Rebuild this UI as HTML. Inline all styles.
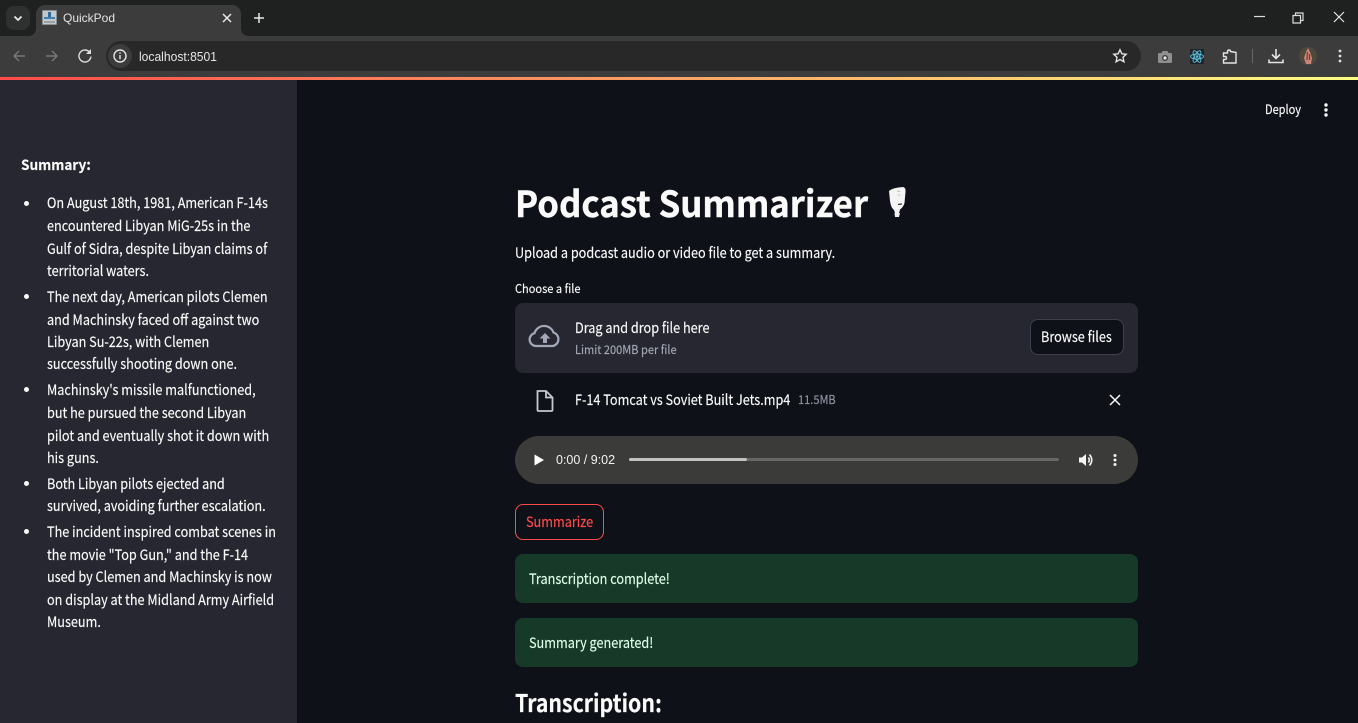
<!DOCTYPE html>
<html lang="en"><head><meta charset="utf-8"><title>QuickPod</title>
<style>
html,body{margin:0;padding:0;width:1358px;height:723px;overflow:hidden;background:#0e1117}
body{position:relative;font-family:"Noto Sans CJK SC","Liberation Sans",sans-serif;color:#fafafa}
.a{position:absolute}
.t{position:absolute;white-space:nowrap;transform-origin:0 50%;-webkit-text-stroke:.15px currentColor}
.n{transform:scaleX(.88)}
.m{transform:scaleX(.92)}
.c{font-family:"Liberation Sans",sans-serif;-webkit-text-stroke:0}
svg{position:absolute;overflow:visible}
.box{position:absolute;left:515px;width:623px;border-radius:8px}
#side .t{transform:scaleX(.88)}
</style></head><body>
<!-- chrome -->
<div class="a" style="left:0;top:0;width:1358px;height:36px;background:#1f2020"></div>
<div class="a" style="left:6px;top:6px;width:24px;height:24px;border-radius:8px;background:#2f3131"></div>
<svg style="left:6px;top:6px" width="24" height="24"><path d="M8.5 10.5L12 14l3.5-3.5" fill="none" stroke="#e8e8e8" stroke-width="1.8"/></svg>
<div class="a" style="left:36px;top:5px;width:205px;height:31px;background:#3c3c3c;border-radius:9px 9px 0 0"></div>
<svg style="left:0;top:0" width="300" height="40"><path d="M28 36c5 0 8-3 8-8v8zM241 28c0 5 3 8 8 8h-8z" fill="#3c3c3c"/></svg>
<div class="a" style="left:42px;top:10px;width:15px;height:15px;background:#c3c8cc;border:.5px solid #8a8f95;box-sizing:border-box;border-radius:1px"></div>
<div class="a" style="left:48px;top:12px;width:3px;height:7px;background:#2c6b9c"></div>
<div class="a" style="left:44px;top:17px;width:11px;height:2px;background:#3f80b0"></div>
<div class="a" style="left:44px;top:21px;width:11px;height:1.500px;background:#9aa1a8"></div>
<div class="t c" style="left:63px;top:10px;font-size:12px;line-height:16px;color:#e3e3e3">QuickPod</div>
<svg style="left:220px;top:11px" width="14" height="14"><path d="M3 3l8 8M11 3l-8 8" stroke="#e8e8e8" stroke-width="1.5"/></svg>
<svg style="left:252px;top:11px" width="14" height="14"><path d="M7 2v10M2 7h10" stroke="#e8e8e8" stroke-width="1.5"/></svg>
<svg style="left:1250px;top:8px" width="100" height="20"><path d="M4 8.5h11" stroke="#ddd" stroke-width="1.2"/><path d="M43 7.5h7.5V15H43zM45.500 7.500V5h7.500v7.500h-2.500" fill="none" stroke="#ddd" stroke-width="1.2"/><path d="M84 4l10 10M94 4L84 14" stroke="#e6e6e6" stroke-width="1.2"/></svg>
<div class="a" style="left:0;top:36px;width:1358px;height:41px;background:#3c3c3c"></div>
<svg style="left:10px;top:46px" width="90" height="20"><g fill="none" stroke="#777" stroke-width="1.4"><path d="M15 10H4M9 5l-5 5 5 5"/><path d="M36 10h11M42 5l5 5-5 5"/></g><path d="M79 5.6a6 6 0 1 0 1.900 5" fill="none" stroke="#dcdcdc" stroke-width="1.4"/><path d="M81 3v5h-5z" fill="#dcdcdc"/></svg>
<div class="a" style="left:106px;top:41px;width:1035px;height:30px;border-radius:15px;background:#282828"></div>
<div class="a" style="left:108px;top:44px;width:24px;height:24px;border-radius:12px;background:#3c3c3c"></div>
<svg style="left:112px;top:48px" width="16" height="16"><circle cx="8" cy="8" r="6" fill="none" stroke="#e6e6e6" stroke-width="1.4"/><path d="M8 7v4.2M8 4.4v1.4" stroke="#e6e6e6" stroke-width="1.4"/></svg>
<div class="t c" style="left:139px;top:48px;font-size:13px;line-height:17px;color:#e6e6e6;transform:scaleX(.93)">localhost:8501</div>
<svg style="left:1112px;top:48px" width="16" height="16"><path d="M8 1.8l1.9 4 4.3.5-3.2 3 .9 4.4L8 11.5l-3.9 2.2.9-4.4-3.2-3 4.3-.5z" fill="none" stroke="#e3e3e3" stroke-width="1.4"/></svg>
<svg style="left:1157px;top:49px" width="16" height="16"><path d="M1 5.500Q1 4 2.500 4H4.500L5.500 2H10.500L11.500 4H13.500Q15 4 15 5.500V12.500Q15 14 13.500 14H2.500Q1 14 1 12.500Z" fill="#8f8f8f"/><circle cx="8" cy="9" r="3" fill="#3c3c3c"/><circle cx="8" cy="9" r="1.600" fill="#e8e8e8"/></svg>
<div class="a" style="left:1190px;top:49px;width:14px;height:15px;background:#20232a"></div>
<svg style="left:1190px;top:49px" width="14" height="15"><g fill="none" stroke="#58c4dc" stroke-width=".9"><ellipse cx="7" cy="7.500" rx="6.500" ry="2.500"/><ellipse cx="7" cy="7.500" rx="6.500" ry="2.500" transform="rotate(60 7 7.500)"/><ellipse cx="7" cy="7.500" rx="6.500" ry="2.500" transform="rotate(120 7 7.500)"/></g><circle cx="7" cy="7.500" r="1.300" fill="#58c4dc"/></svg>
<svg style="left:1222px;top:49px" width="16" height="16"><path d="M1.500 4H5.500V2.500Q5.500 1 7 1T8.500 2.500V2.500L14 3.500V14H1.500V10.500H3Q4.500 10.500 4.500 9T3 7.500H1.500Z" fill="none" stroke="#e3e3e3" stroke-width="1.400"/></svg>
<div class="a" style="left:1252px;top:49px;width:1px;height:14px;background:#666"></div>
<svg style="left:1268px;top:48px" width="16" height="16"><path d="M8 1v9M4 6.500l4 4 4-4M1 11.500V14.500H15V11.500" fill="none" stroke="#e3e3e3" stroke-width="1.600"/></svg>
<div class="a" style="left:1299px;top:47px;width:18px;height:18px;border-radius:9px;background:#4d4a3c"></div>
<svg style="left:1299px;top:47px" width="18" height="18"><path d="M9 1L7 5 5 11l2 6h5l1-6-2-6z" fill="#c9857a"/><path d="M8.500 5L8 13M10.500 7v6" stroke="#8c2f28" stroke-width="1.200"/></svg>
<svg style="left:1336px;top:48px" width="8" height="16"><circle cx="4" cy="3" r="1.400" fill="#ddd"/><circle cx="4" cy="8" r="1.400" fill="#ddd"/><circle cx="4" cy="13" r="1.400" fill="#ddd"/></svg>
<div class="a" style="left:0;top:77px;width:1358px;height:3px;background:linear-gradient(90deg,#ff4b4b,#fffd80)"></div>
<!-- sidebar -->
<div class="a" style="left:0;top:80px;width:297px;height:643px;background:#262730"></div>
<div class="t" style="left:21px;top:153px;font-size:14.400px;line-height:23px;font-weight:600;transform:scaleX(.945)">Summary:</div>
<div id="side" style="font-size:14.400px;line-height:23px">
<div class="a" style="left:24px;top:201px;width:5px;height:5px;border-radius:3px;background:#fafafa"></div>
<div class="t" style="left:46.500px;top:191px">On August 18th, 1981, American F-14s</div>
<div class="t" style="left:46.500px;top:214px">encountered Libyan MiG-25s in the</div>
<div class="t" style="left:46.500px;top:237px">Gulf of Sidra, despite Libyan claims of</div>
<div class="t" style="left:46.500px;top:259px">territorial waters.</div>
<div class="a" style="left:24px;top:294px;width:5px;height:5px;border-radius:3px;background:#fafafa"></div>
<div class="t" style="left:46.500px;top:285px">The next day, American pilots Clemen</div>
<div class="t" style="left:46.500px;top:308px">and Machinsky faced off against two</div>
<div class="t" style="left:46.500px;top:330px">Libyan Su-22s, with Clemen</div>
<div class="t" style="left:46.500px;top:352px">successfully shooting down one.</div>
<div class="a" style="left:24px;top:387px;width:5px;height:5px;border-radius:3px;background:#fafafa"></div>
<div class="t" style="left:46.500px;top:378px">Machinsky's missile malfunctioned,</div>
<div class="t" style="left:46.500px;top:401px">but he pursued the second Libyan</div>
<div class="t" style="left:46.500px;top:424px">pilot and eventually shot it down with</div>
<div class="t" style="left:46.500px;top:446px">his guns.</div>
<div class="a" style="left:24px;top:481px;width:5px;height:5px;border-radius:3px;background:#fafafa"></div>
<div class="t" style="left:46.500px;top:472px">Both Libyan pilots ejected and</div>
<div class="t" style="left:46.500px;top:494px">survived, avoiding further escalation.</div>
<div class="a" style="left:24px;top:529px;width:5px;height:5px;border-radius:3px;background:#fafafa"></div>
<div class="t" style="left:46.500px;top:520px">The incident inspired combat scenes in</div>
<div class="t" style="left:46.500px;top:543px">the movie "Top Gun," and the F-14</div>
<div class="t" style="left:46.500px;top:565px">used by Clemen and Machinsky is now</div>
<div class="t" style="left:46.500px;top:588px">on display at the Midland Army Airfield</div>
<div class="t" style="left:46.500px;top:610px">Museum.</div>
</div>
<!-- header -->
<div class="t n" style="left:1265px;top:99px;font-size:12.500px;line-height:19px">Deploy</div>
<svg style="left:1322px;top:102px" width="8" height="16"><circle cx="4" cy="3" r="1.700" fill="#fafafa"/><circle cx="4" cy="8" r="1.700" fill="#fafafa"/><circle cx="4" cy="13" r="1.700" fill="#fafafa"/></svg>
<!-- main -->
<div class="t" style="left:514.500px;top:177px;font-size:36px;line-height:50px;font-weight:700;transform:scaleX(.964);-webkit-text-stroke:.4px #fafafa">Podcast Summarizer</div>
<svg style="left:884px;top:186px" width="24" height="34"><path d="M5 5Q9 1.500 19 1Q22 1.500 21.500 6L20.500 17Q19.500 21 15.500 24L10 24Q7 22 6 15Z" fill="#f4f4f4"/><path d="M10 24h6l-1 3h1l-1 4h-4l-.5-4h.5z" fill="#f0f0f0"/><path d="M14 18.500l4-.5" stroke="#333" stroke-width="1.200"/><path d="M13 5l3 .5M14 9l2 .3" stroke="#bbb" stroke-width="1"/></svg>
<div class="t n" style="left:514.500px;top:241px;font-size:14.400px;line-height:23px">Upload a podcast audio or video file to get a summary.</div>
<div class="t m" style="left:514.500px;top:280px;font-size:12px;line-height:18px">Choose a file</div>
<div class="box" style="top:303px;height:70px;background:#262730"></div>
<svg style="left:528px;top:323px" width="34" height="28"><path d="M9 23H8A6.500 6.500 0 0 1 6.500 10.200 10 10 0 0 1 25.500 9.500 7 7 0 0 1 25 23Z" fill="none" stroke="#a3a8b8" stroke-width="2.200"/><path d="M17 10l5.500 5.500H19V20H15V15.500H11.500Z" fill="#a3a8b8"/></svg>
<div class="t n" style="left:575px;top:317px;font-size:14.400px;line-height:22px">Drag and drop file here</div>
<div class="t m" style="left:575px;top:341px;font-size:12px;line-height:18px;color:#a3a8b4">Limit 200MB per file</div>
<div class="a" style="left:1030px;top:319px;width:94px;height:36px;box-sizing:border-box;border:1px solid #3e404b;border-radius:8px;background:#0e1117"></div>
<div class="t n" style="left:1041px;top:326px;font-size:14.400px;line-height:22px">Browse files</div>
<svg style="left:535px;top:389px" width="20" height="24"><path d="M2.500 2H11L17.500 8.500V21Q17.500 22 16.500 22H3.500Q2.500 22 2.500 21ZM11 2V8.500H17.500" fill="none" stroke="#c5c8d2" stroke-width="1.800"/></svg>
<div class="t n" style="left:575px;top:389px;font-size:14.400px;line-height:22px">F-14 Tomcat vs Soviet Built Jets.mp4</div>
<div class="t m" style="left:798px;top:391px;font-size:12px;line-height:18px;color:#8f94a0">11.5MB</div>
<svg style="left:1108px;top:393px" width="14" height="14"><path d="M2 2l10 10M12 2L2 12" stroke="#fafafa" stroke-width="1.500"/></svg>
<div class="a" style="left:515px;top:436px;width:623px;height:48px;border-radius:24px;background:#3b3c3a"></div>
<svg style="left:532px;top:453px" width="14" height="14"><path d="M2.500 1.500L12 7 2.500 12.500Z" fill="#fff"/></svg>
<div class="t c" style="left:556px;top:451px;font-size:12.500px;line-height:18px;color:#f2f2f2">0:00 / 9:02</div>
<div class="a" style="left:629px;top:458px;width:430px;height:3px;border-radius:2px;background:#666"></div>
<div class="a" style="left:629px;top:458px;width:118px;height:3px;border-radius:2px;background:#c2c2c2"></div>
<svg style="left:1078px;top:452px" width="17" height="16"><path d="M1 5.500H4L8 2V14L4 10.500H1Z" fill="#f4f4f4"/><path d="M10.500 5.500Q12 8 10.500 10.500M11.500 2.500Q16 8 11.500 13.500" fill="none" stroke="#f4f4f4" stroke-width="1.600"/></svg>
<svg style="left:1111px;top:452px" width="8" height="16"><circle cx="4" cy="3.500" r="1.500" fill="#f4f4f4"/><circle cx="4" cy="8" r="1.500" fill="#f4f4f4"/><circle cx="4" cy="12.500" r="1.500" fill="#f4f4f4"/></svg>
<div class="a" style="left:515px;top:504px;width:89px;height:36px;box-sizing:border-box;border:1px solid #ff4b4b;border-radius:8px"></div>
<div class="t n" style="left:526px;top:511px;font-size:14.400px;line-height:22px;color:#ff4b4b">Summarize</div>
<div class="box" style="top:554px;height:49px;background:#173928"></div>
<div class="t n" style="left:529px;top:567px;font-size:14.400px;line-height:23px;color:#dffde9">Transcription complete!</div>
<div class="box" style="top:618px;height:49px;background:#173928"></div>
<div class="t n" style="left:529px;top:631px;font-size:14.400px;line-height:23px;color:#dffde9">Summary generated!</div>
<div class="t" style="left:514.500px;top:684px;font-size:24px;line-height:36px;font-weight:600;transform:scaleX(.886)">Transcription:</div>
</body></html>
